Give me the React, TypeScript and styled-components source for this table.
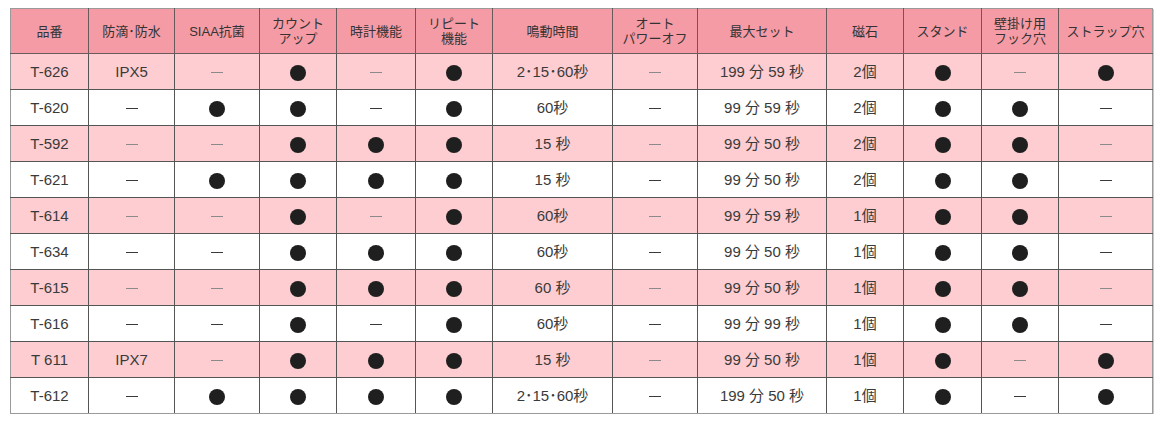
import * as React from 'react';
import styled, { createGlobalStyle } from 'styled-components';

const GlobalStyle = createGlobalStyle`
	body {
		margin: 0;
		background: #ffffff;
		font-family: "Liberation Sans", "Noto Sans CJK JP", sans-serif;
		color: #333333;
	}
`;

type Cell = string | boolean;

const columns: { label: string[]; width: number }[] = [
	{ label: ['品番'], width: 78 },
	{ label: ['防滴･防水'], width: 86 },
	{ label: ['SIAA抗菌'], width: 85 },
	{ label: ['カウント', 'アップ'], width: 77 },
	{ label: ['時計機能'], width: 79 },
	{ label: ['リピート', '機能'], width: 77 },
	{ label: ['鳴動時間'], width: 120 },
	{ label: ['オート', 'パワーオフ'], width: 85 },
	{ label: ['最大セット'], width: 129 },
	{ label: ['磁石'], width: 77 },
	{ label: ['スタンド'], width: 78 },
	{ label: ['壁掛け用', 'フック穴'], width: 77 },
	{ label: ['ストラップ穴'], width: 94 },
];

const Y = true;
const N = false;

const rows: Cell[][] = [
	['T-626', 'IPX5', N, Y, N, Y, '2･15･60秒', N, '199 分 59 秒', '2個', Y, N, Y],
	['T-620', N, Y, Y, N, Y, '60秒', N, '99 分 59 秒', '2個', Y, Y, N],
	['T-592', N, N, Y, Y, Y, '15 秒', N, '99 分 50 秒', '2個', Y, Y, N],
	['T-621', N, Y, Y, Y, Y, '15 秒', N, '99 分 50 秒', '2個', Y, Y, N],
	['T-614', N, N, Y, N, Y, '60秒', N, '99 分 59 秒', '1個', Y, Y, N],
	['T-634', N, N, Y, Y, Y, '60秒', N, '99 分 50 秒', '1個', Y, Y, N],
	['T-615', N, N, Y, Y, Y, '60 秒', N, '99 分 50 秒', '1個', Y, Y, N],
	['T-616', N, N, Y, N, Y, '60秒', N, '99 分 99 秒', '1個', Y, Y, N],
	['T 611', 'IPX7', N, Y, Y, Y, '15 秒', N, '99 分 50 秒', '1個', Y, N, Y],
	['T-612', N, Y, Y, Y, Y, '2･15･60秒', N, '199 分 50 秒', '1個', Y, N, Y],
];

export default function App() {
	return (
		<>
			<GlobalStyle />
			<Page>
				<Table>
					<colgroup>
						{columns.map((c, i) => (
							<col key={i} style={{ width: c.width }} />
						))}
					</colgroup>
					<thead>
						<tr>
							{columns.map((c, i) => (
								<Th key={i}>
									{c.label.map((line, j) => (
										<Line key={j}>{line}</Line>
									))}
								</Th>
							))}
						</tr>
					</thead>
					<tbody>
						{rows.map((row, r) => (
							<Tr key={r} $pink={r % 2 === 0}>
								{row.map((cell, c) => (
									<Td key={c}>
										{cell === true ? (
											<Dot />
										) : cell === false ? (
											<Dash $light={r % 2 === 0} />
										) : (
											cell
										)}
									</Td>
								))}
							</Tr>
						))}
					</tbody>
				</Table>
			</Page>
		</>
	);
}

const Page = styled.div`
	padding: 8px 0 0 10px;
`;

const Table = styled.table`
	border-collapse: collapse;
	table-layout: fixed;
	width: 1142px;
	border: 1px solid #9a9a9a;
	box-shadow: 1px 1px 0 #c8c8c8;
`;

const Th = styled.th`
	height: 45px;
	box-sizing: border-box;
	padding: 0;
	background: #f59ba5;
	border: 1px solid #6a5a5c;
	border-top-color: #9a9a9a;
	font-weight: 400;
	font-size: 13px;
	line-height: 15px;
	color: #333333;
	text-align: center;
	vertical-align: middle;
	&:first-child {
		border-left-color: #9a9a9a;
	}
	&:last-child {
		border-right-color: #9a9a9a;
	}
`;

const Line = styled.div`
	white-space: nowrap;
`;

const Tr = styled.tr<{ $pink: boolean }>`
	background: ${({ $pink }) => ($pink ? '#fdcdd1' : '#ffffff')};
`;

const Td = styled.td`
	height: 36px;
	box-sizing: border-box;
	padding: 0;
	border: 1px solid #555555;
	font-size: 15px;
	line-height: 18px;
	color: #3a3a3a;
	text-align: center;
	vertical-align: middle;
	white-space: nowrap;
	&:first-child {
		border-left-color: #9a9a9a;
	}
	&:last-child {
		border-right-color: #9a9a9a;
	}
	tr:last-child > & {
		border-bottom-color: #9a9a9a;
	}
`;

const Dot = styled.span`
	display: inline-block;
	width: 16px;
	height: 16px;
	border-radius: 50%;
	background: #1f1f1f;
	vertical-align: middle;
`;

const Dash = styled.span<{ $light: boolean }>`
	display: inline-block;
	width: 12px;
	height: 1px;
	background: ${({ $light }) => ($light ? '#8a8a8a' : '#3a3a3a')};
	vertical-align: middle;
`;
